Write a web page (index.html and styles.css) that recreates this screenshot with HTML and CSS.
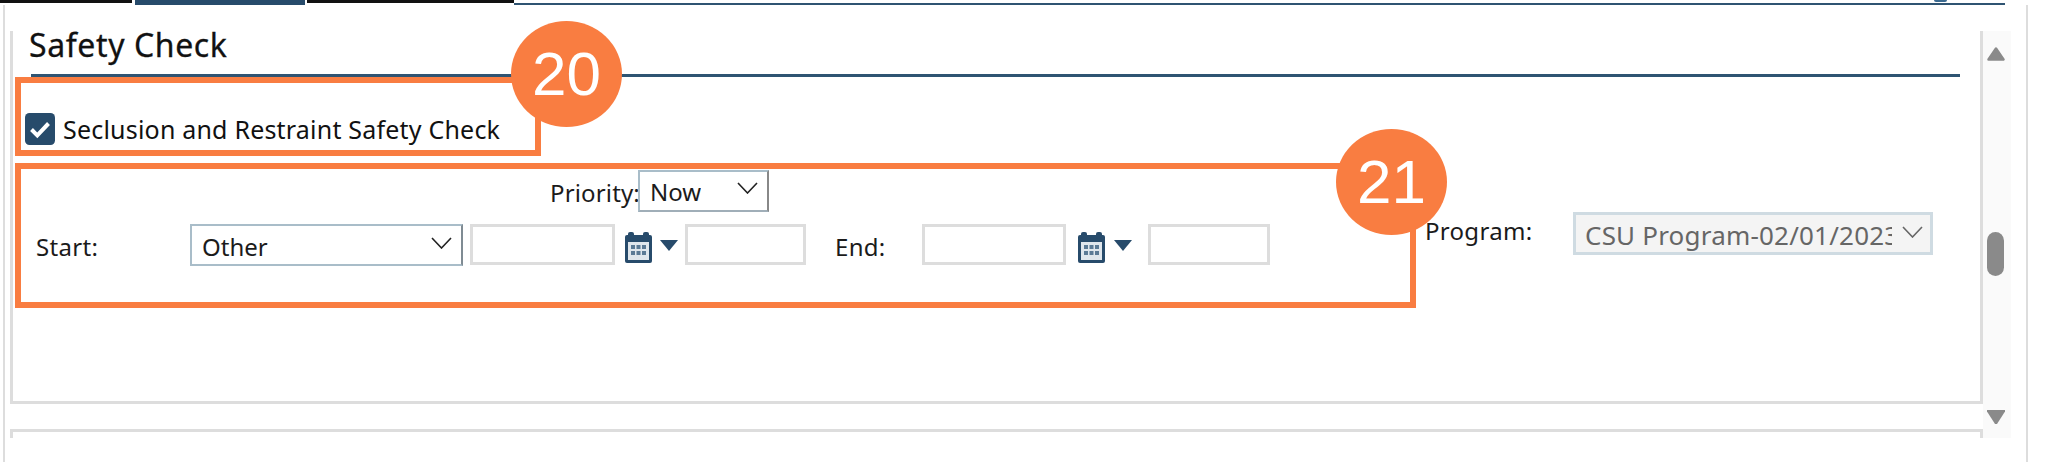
FILE: index.html
```html
<!DOCTYPE html>
<html lang="en">
<head>
<meta charset="utf-8">
<title>Safety Check</title>
<link rel="stylesheet" href="styles.css">
</head>
<body>
<div class="page">
  <div class="tabs">
    <div class="tab tab-a"></div>
    <div class="tab tab-b"></div>
    <div class="tab tab-c"></div>
    <div class="tab-rest"></div>
  </div>
  <span class="tab-dot"></span>
  <div class="frame">
    <div class="col">
      <section class="panel">
        <h2 class="title">Safety Check</h2>
        <div class="rule"></div>
        <label class="check-row">
          <svg class="checkbox" viewBox="0 0 30 32" aria-hidden="true">
            <rect width="30" height="32" rx="4.5" fill="#274b6b"/>
            <path d="M6.500 16.500l5.800 5.800L23.500 10.500" fill="none" stroke="#fff" stroke-width="4"/>
          </svg>
          <span>Seclusion and Restraint Safety Check</span>
        </label>
        <div class="form-row">
          <div class="fields">
            <div class="priority-row">
              <span class="priority-label">Priority:</span>
              <div class="select select-now">
                <span class="select-text">Now</span>
                <svg class="chev" viewBox="0 0 21 12" aria-hidden="true"><path d="M1 1l9.5 10L20 1" fill="none" stroke="#222" stroke-width="1.6"/></svg>
              </div>
            </div>
            <div class="start-row">
              <span class="lbl lbl-start">Start:</span>
              <div class="select select-other">
                <span class="select-text">Other</span>
                <svg class="chev" viewBox="0 0 21 12" aria-hidden="true"><path d="M1 1l9.5 10L20 1" fill="none" stroke="#222" stroke-width="1.6"/></svg>
              </div>
              <div class="input input-a"></div>
              <svg class="cal" viewBox="0 0 27 31" aria-hidden="true">
                <rect y="3" width="27" height="28" rx="2" fill="#274b6b"/>
                <rect x="3" width="6" height="7" rx="2" fill="#274b6b"/>
                <rect x="18" width="6" height="7" rx="2" fill="#274b6b"/>
                <rect x="3" y="10" width="21" height="18" fill="#dfe6ec"/>
                <g fill="#5b7a95"><rect x="6" y="13" width="4" height="4"/><rect x="11.500" y="13" width="4" height="4"/><rect x="17" y="13" width="4" height="4"/><rect x="6" y="19" width="4" height="4"/><rect x="11.500" y="19" width="4" height="4"/><rect x="17" y="19" width="4" height="4"/></g>
              </svg>
              <svg class="arrow" viewBox="0 0 18 11" aria-hidden="true"><path d="M0 0h18L9 11z" fill="#274b6b"/></svg>
              <div class="input input-b"></div>
              <span class="lbl lbl-end">End:</span>
              <div class="input input-c"></div>
              <svg class="cal cal-end" viewBox="0 0 27 31" aria-hidden="true">
                <rect y="3" width="27" height="28" rx="2" fill="#274b6b"/>
                <rect x="3" width="6" height="7" rx="2" fill="#274b6b"/>
                <rect x="18" width="6" height="7" rx="2" fill="#274b6b"/>
                <rect x="3" y="10" width="21" height="18" fill="#dfe6ec"/>
                <g fill="#5b7a95"><rect x="6" y="13" width="4" height="4"/><rect x="11.500" y="13" width="4" height="4"/><rect x="17" y="13" width="4" height="4"/><rect x="6" y="19" width="4" height="4"/><rect x="11.500" y="19" width="4" height="4"/><rect x="17" y="19" width="4" height="4"/></g>
              </svg>
              <svg class="arrow arrow-end" viewBox="0 0 18 11" aria-hidden="true"><path d="M0 0h18L9 11z" fill="#274b6b"/></svg>
              <div class="input input-d"></div>
            </div>
          </div>
          <div class="program">
            <span class="lbl lbl-program">Program:</span>
            <div class="select select-program">
              <span class="select-text">CSU Program-02/01/2023</span>
              <svg class="chev" viewBox="0 0 21 12" aria-hidden="true"><path d="M1 1l9.5 10L20 1" fill="none" stroke="#666" stroke-width="1.6"/></svg>
            </div>
          </div>
        </div>
      </section>
      <section class="panel-next"></section>
    </div>
    <div class="scrollbar">
      <svg class="sb-up" viewBox="0 0 18 14" aria-hidden="true"><path d="M9 1.500L16.500 12.500H1.500z" fill="#8a8a8a" stroke="#8a8a8a" stroke-width="2.500" stroke-linejoin="round"/></svg>
      <div class="sb-thumb"></div>
      <svg class="sb-down" viewBox="0 0 18 14" aria-hidden="true"><path d="M0 0h18v1.500L10 14H8L0 1.500z" fill="#8a8a8a"/></svg>
    </div>
  </div>

  <div class="mark mark-20"></div>
  <div class="mark mark-21"></div>
  <div class="badge badge-20">20</div>
  <div class="badge badge-21">21</div>
</div>
</body>
</html>
```
FILE: styles.css
```css
* { box-sizing: border-box; }
html, body { margin: 0; padding: 0; background: #fff; }
body { width: 2048px; height: 462px; overflow: hidden; font-family: "Noto Sans", Roboto, sans-serif; color: #1b1b1b; }
.page { position: relative; width: 2048px; height: 462px; }

.tabs { display: flex; align-items: flex-start; width: 2005px; height: 5px; }
.tab-a { width: 132px; height: 3px; background: #111; }
.tab-b { width: 170px; height: 5px; margin-left: 3px; background: #274b6b; }
.tab-c { width: 207px; height: 3px; margin-left: 2px; background: #111; }
.tab-rest { flex: 1; height: 5px; border-top: 3px solid #fff; background: #2f5472; }
.tab-dot { position: absolute; left: 1934px; top: 0; width: 13px; height: 2px; border-radius: 0 0 7px 7px; background: #3b6a90; }

.frame { display: flex; align-items: flex-start; margin-left: 3px; width: 2025px; height: 457px; padding: 26px 0 0 5px; border-left: 2px solid #ddd; border-right: 2px solid #ddd; }
.col { width: 1973px; height: 407px; }

.panel { height: 373px; border: 3px solid #ddd; border-top: 0; }
.panel-next { height: 9px; margin-top: 25px; border: 3px solid #ddd; border-bottom: 0; }

.title { margin: 0 0 0 16px; height: 43px; font-size: 32px; line-height: 28px; font-weight: 400; letter-spacing: 0.6px; color: #111; -webkit-text-stroke: 0.3px #111; }
.rule { height: 3px; margin: 0 20px 0 18px; background: #2f5472; }

.check-row { display: flex; align-items: center; gap: 8px; height: 31px; margin: 36px 0 0 12px; font-size: 25px; letter-spacing: 0.2px; color: #111; }
.checkbox { width: 30px; height: 32px; flex: none; }

.form-row { display: flex; align-items: flex-start; margin-top: 26px; }
.fields { margin-left: 23px; }
.priority-row { display: flex; align-items: center; height: 42px; padding-left: 514px; font-size: 24px; }
.priority-label { flex: none; width: 88px; padding-top: 2px; letter-spacing: 0.15px; white-space: nowrap; }
.start-row { display: flex; align-items: flex-start; margin-top: 12px; font-size: 24px; }

.lbl { display: block; padding-top: 4px; line-height: 38px; letter-spacing: 0.3px; }
.lbl-start { width: 154px; }
.lbl-end { width: 87px; margin-left: 29px; }
.lbl-program { width: 148px; padding-top: 0; }

.select { display: flex; align-items: center; justify-content: space-between; height: 42px; padding: 2px 9px 0 10px; border: 2px solid #a9bdc9; border-right-color: #7f8b93; background: #fff; }
.select-text { overflow: hidden; white-space: nowrap; }
.chev { width: 21px; height: 12px; flex: none; margin-top: -6px; }
.select-now { width: 131px; padding-top: 0; border-right-color: #888; border-bottom-color: #a0aeb8; }
.select-other { width: 273px; }
.select-program { width: 360px; height: 43px; border: 3px solid #cfdbe2; background: #f4f4f4; color: #666; padding: 2px 7px 0 9px; font-size: 26px; letter-spacing: 0.2px; }
.select-program .select-text { width: 307px; }

.input { height: 41px; border: 3px solid #ddd; background: #fff; }
.input-a { width: 145px; margin-left: 7px; }
.input-b { width: 121px; margin-left: 7px; }
.input-c { width: 144px; }
.input-d { width: 122px; margin-left: 16px; }

.cal { width: 27px; height: 31px; flex: none; margin: 8px 0 0 10px; }
.cal-end { margin-left: 12px; }
.arrow { width: 18px; height: 11px; flex: none; margin: 16px 0 0 8px; }
.arrow-end { margin-left: 9px; }

.program { display: flex; align-items: flex-start; margin: 42px 0 0 155px; font-size: 24px; }

.scrollbar { position: relative; width: 28px; height: 407px; background: #fafafa; }
.sb-up { position: absolute; left: 4px; top: 16px; width: 18px; height: 14px; }
.sb-thumb { position: absolute; left: 4px; top: 201px; width: 17px; height: 44px; border-radius: 9px; background: #8a8a8a; }
.sb-down { position: absolute; left: 4px; top: 379px; width: 18px; height: 14px; }

.mark { position: absolute; border: 6px solid #f97d41; }
.mark-20 { left: 15px; top: 77px; width: 526px; height: 79px; }
.mark-21 { left: 15px; top: 163px; width: 1401px; height: 145px; }

.badge { position: absolute; width: 111px; height: 106px; border-radius: 50%; background: #f97d41; color: #fff; font-family: "Liberation Sans", Arial, sans-serif; font-size: 62px; line-height: 106px; text-align: center; }
.badge-20 { left: 511px; top: 21px; }
.badge-21 { left: 1336px; top: 129px; }
```
